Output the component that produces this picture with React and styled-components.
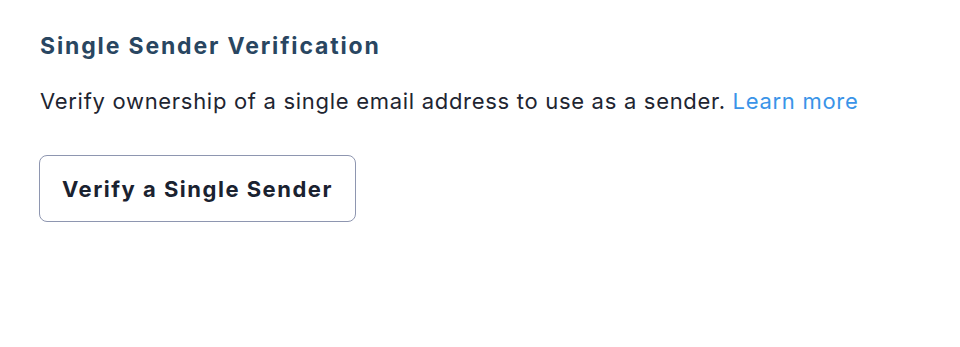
import React from 'react';
import styled, { createGlobalStyle } from 'styled-components';

const GlobalStyle = createGlobalStyle`
  body {
    margin: 0;
    background: #ffffff;
    font-family: Inter, "Liberation Sans", sans-serif;
  }
`;

const Section = styled.section`
  padding: 29px 40px;
  display: flex;
  flex-direction: column;
  align-items: flex-start;
`;

const Title = styled.h2`
  margin: 0;
  font-size: 23px;
  font-weight: 700;
  letter-spacing: 1.85px;
  line-height: 34px;
  color: #294661;
`;

const Text = styled.p`
  margin: 22px 0 0;
  font-size: 22px;
  letter-spacing: 0.7px;
  line-height: 32px;
  color: #1e2531;
`;

const Link = styled.a`
  color: #3a94e8;
  text-decoration: none;
  cursor: pointer;
`;

const OutlineButton = styled.button`
  margin: 38px 0 0 -1px;
  height: 67px;
  padding: 0 22px;
  background: #ffffff;
  border: 1.5px solid #8e96b0;
  border-radius: 8px;
  font-family: inherit;
  font-size: 22px;
  font-weight: 700;
  letter-spacing: 1.5px;
  color: #1a2230;
  cursor: pointer;
`;

const App = () => (
  <>
    <GlobalStyle />
    <Section>
      <Title>Single Sender Verification</Title>
      <Text>
        Verify ownership of a single email address to use as a sender. <Link>Learn more</Link>
      </Text>
      <OutlineButton>Verify a Single Sender</OutlineButton>
    </Section>
  </>
);

export default App;
